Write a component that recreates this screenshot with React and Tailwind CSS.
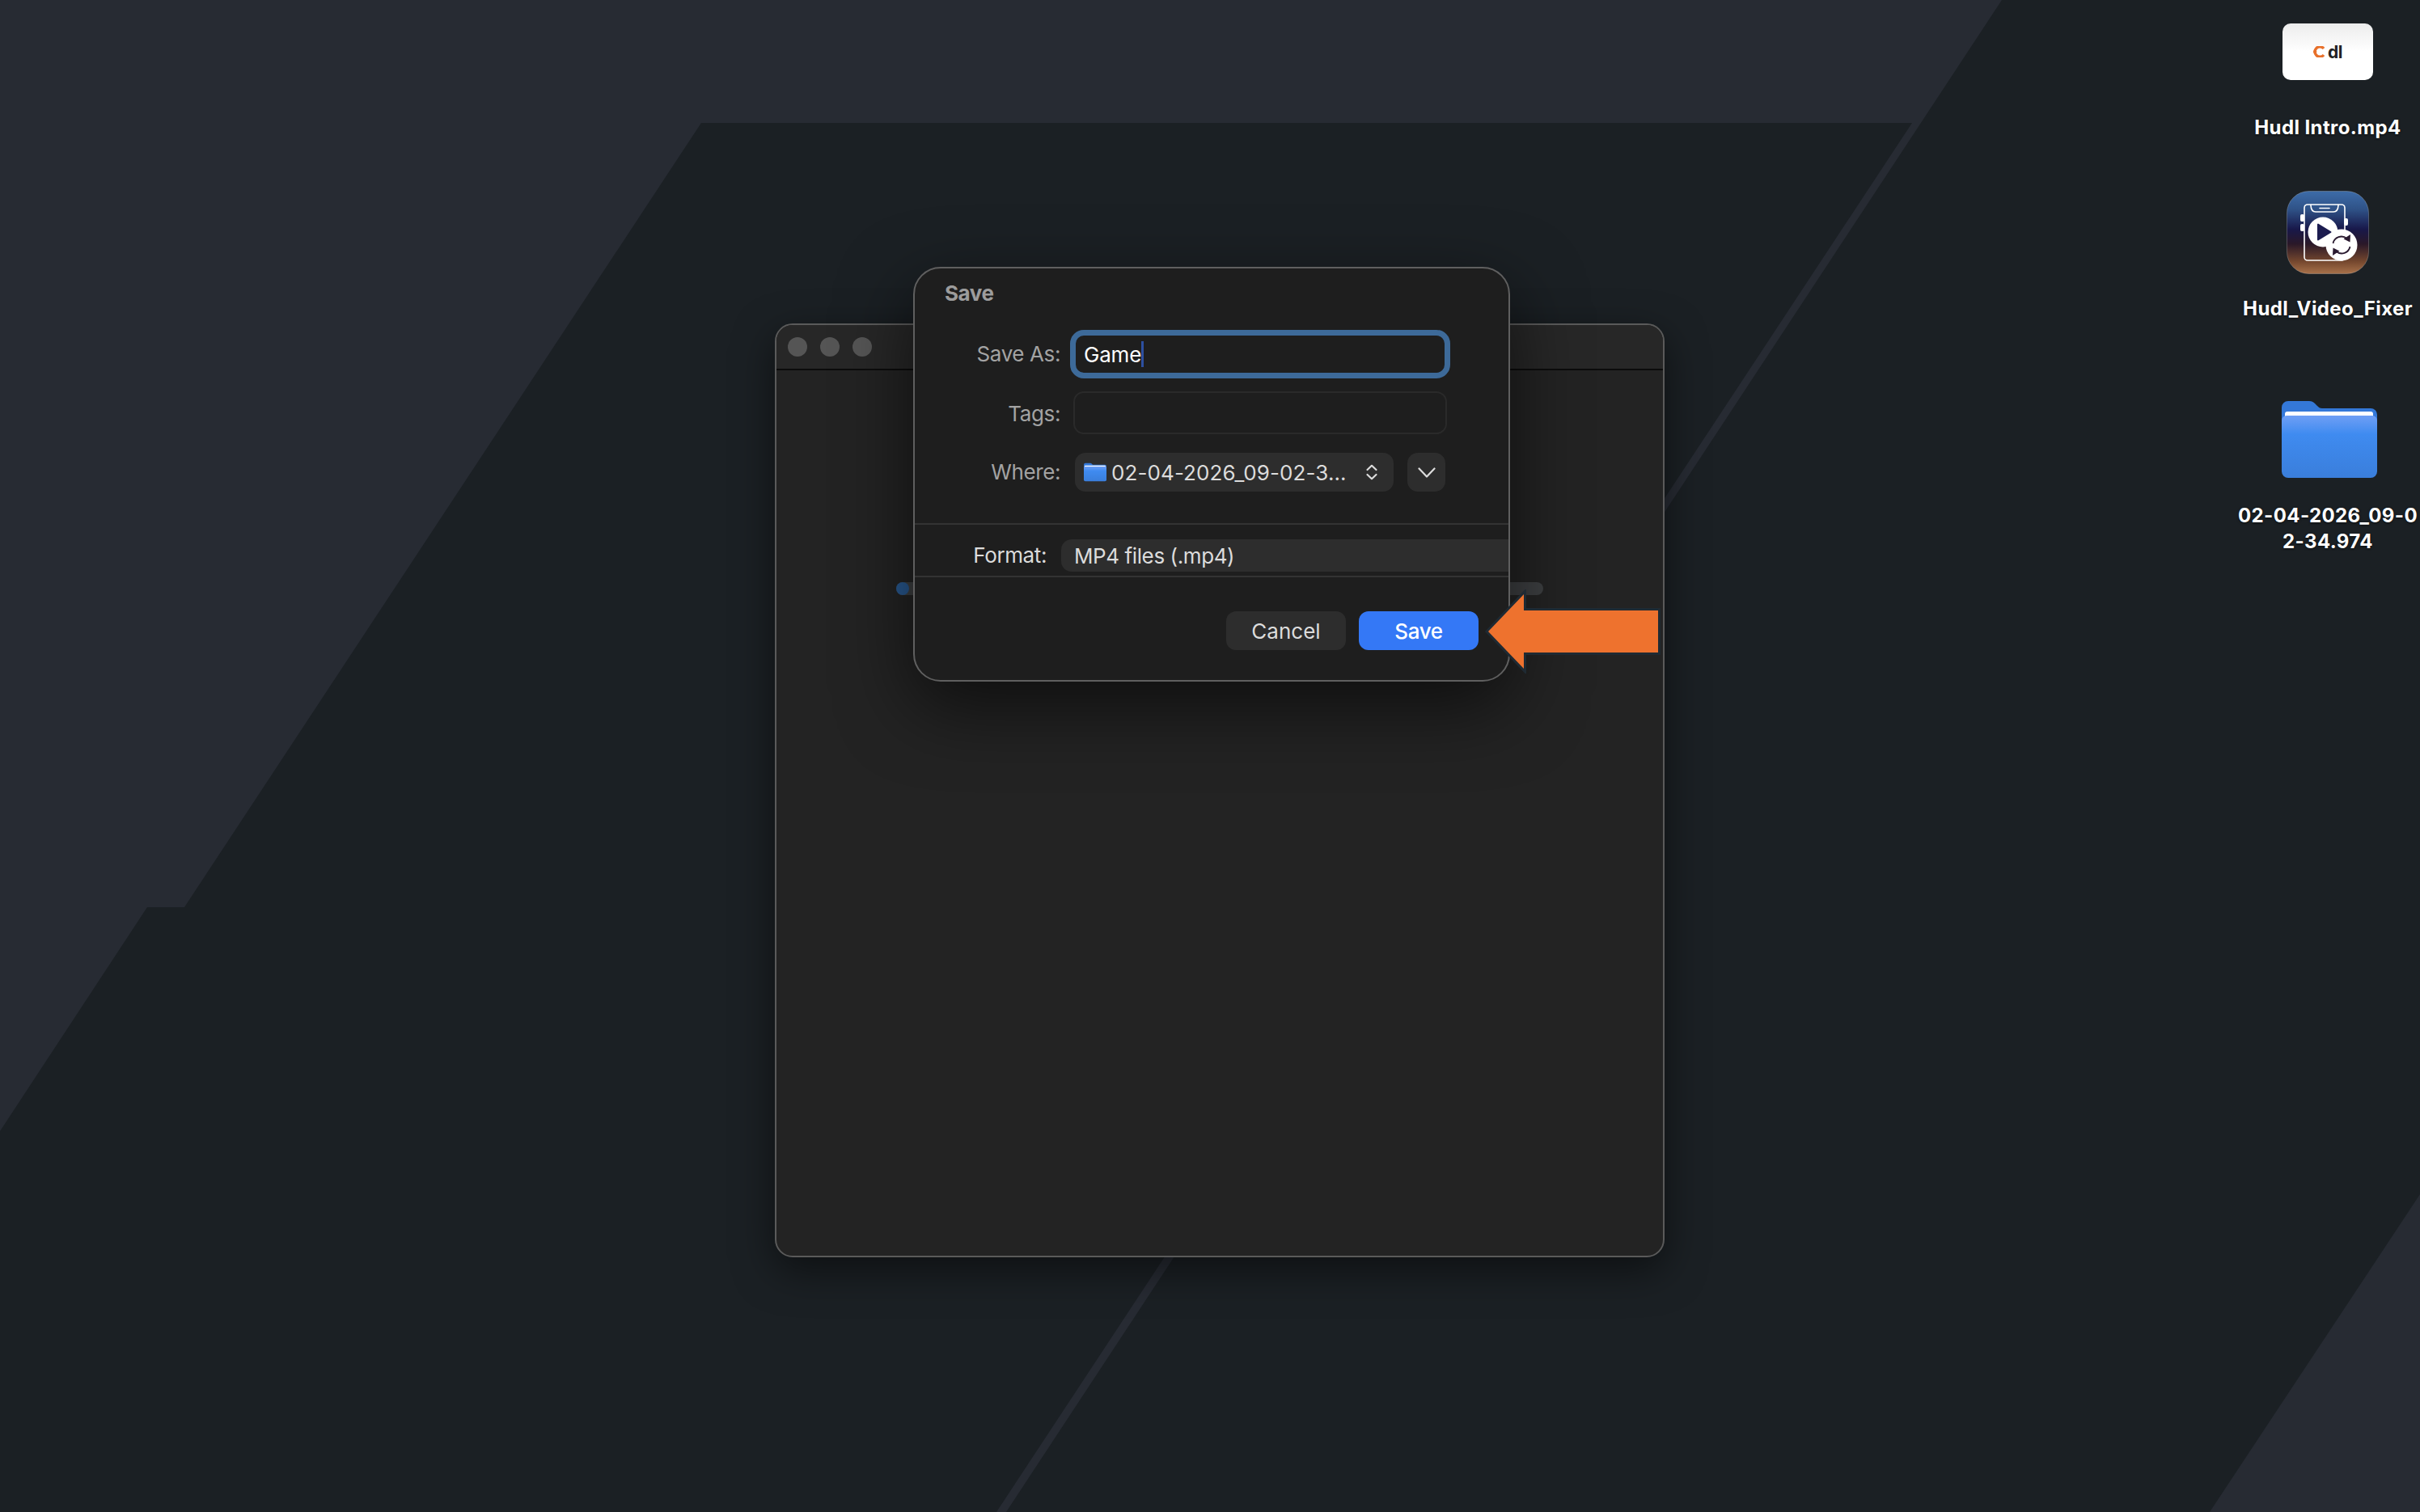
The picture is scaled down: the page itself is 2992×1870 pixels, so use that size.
import React from "react";

function FolderIcon({ className, id }) {
  return (
    <svg viewBox="0 0 118 95" className={className}>
      <defs>
        <linearGradient id={id} x1="0" y1="0" x2="0" y2="1">
          <stop offset="0" stopColor="#6f9ff5" />
          <stop offset="0.3" stopColor="#3f8bf0" />
          <stop offset="1" stopColor="#3a7edb" />
        </linearGradient>
      </defs>
      <path d="M0 8a8 8 0 0 1 8-8h26c3 0 5 1 7 3l3 3c2 2 3 3 6 3h60a8 8 0 0 1 8 8v40H0z" fill="#3478d8" />
      <rect x="4" y="13" width="109" height="14" rx="3" fill="#ffffff" />
      <path d="M0 24a6 6 0 0 1 6-6h106a6 6 0 0 1 6 6v63a8 8 0 0 1-8 8H8a8 8 0 0 1-8-8z" fill={`url(#${id})`} />
    </svg>
  );
}

function FixerIcon() {
  return (
    <svg viewBox="0 0 102 103" className="h-[103px] w-[102px]">
      <defs>
        <linearGradient id="fixerBg" x1="0" y1="0" x2="0" y2="1">
          <stop offset="0" stopColor="#3d6ca8" />
          <stop offset="0.22" stopColor="#2f5287" />
          <stop offset="0.46" stopColor="#18184a" />
          <stop offset="0.64" stopColor="#2a1828" />
          <stop offset="0.85" stopColor="#74472e" />
          <stop offset="1" stopColor="#a8714a" />
        </linearGradient>
      </defs>
      <rect x="0.5" y="0.5" width="101" height="102" rx="27" fill="url(#fixerBg)" stroke="#ffffff" strokeOpacity="0.22" />
      <rect x="17" y="29" width="5" height="9" rx="2" fill="#fff" />
      <rect x="17" y="41" width="5" height="9" rx="2" fill="#fff" />
      <rect x="71" y="34" width="5" height="9" rx="2" fill="#fff" />
      <rect x="22" y="17" width="50" height="69" rx="4" fill="none" stroke="#fff" strokeWidth="1.6" />
      <path d="M30 17c0 6 2 9 6 9h22c4 0 6-3 6-9" fill="none" stroke="#fff" strokeWidth="1.6" />
      <path d="M41 21.500h12" stroke="#fff" strokeWidth="1.6" strokeLinecap="round" />
      <circle cx="45" cy="51" r="18.500" fill="#fff" />
      <path d="M39 41.500v19l15.500-9.500z" fill="#1c1c50" stroke="#1c1c50" strokeWidth="2" strokeLinejoin="round" />
      <circle cx="68" cy="67" r="19.500" fill="#fff" />
      <path d="M57.500 65a10.500 10.500 0 0 1 17-6" fill="none" stroke="#2a1a30" strokeWidth="1.800" />
      <path d="M78.500 69a10.500 10.500 0 0 1-17 6" fill="none" stroke="#2a1a30" strokeWidth="1.800" />
      <path d="M79 54l-0.500 9.500-8-4z" fill="#2a1a30" />
      <path d="M57 80l0.500-9.500 8 4z" fill="#2a1a30" />
    </svg>
  );
}

function DesktopLabel({ children }) {
  return (
    <div className="h-8 text-[24px] leading-8 font-bold tracking-[0.4px] whitespace-nowrap text-white [text-shadow:0_1px_3px_rgba(0,0,0,0.6)]">
      {children}
    </div>
  );
}

function DesktopIcons() {
  return (
    <div className="absolute top-0 left-[2764px] flex w-[228px] flex-col items-center pt-[29px]">
      <div className="flex h-[70px] w-[112px] items-center justify-center gap-[3px] rounded-[10px] bg-gradient-to-b from-[#ececec] to-[#ffffff] to-50%">
        <svg viewBox="0 0 15 14" className="h-[14px] w-[15px]">
          <path d="M13 3A6.200 6.200 0 1 0 13 11" fill="none" stroke="#e8702a" strokeWidth="3.400" />
          <circle cx="2.200" cy="7" r="2.200" fill="#e8702a" />
        </svg>
        <span className="text-[21px] leading-none font-bold tracking-[-0.5px] text-[#222222]">dl</span>
      </div>
      <div className="mt-[43px]">
        <DesktopLabel>Hudl Intro.mp4</DesktopLabel>
      </div>
      <div className="mt-[62px] h-[103px]">
        <FixerIcon />
      </div>
      <div className="mt-[27px]">
        <DesktopLabel>Hudl_Video_Fixer</DesktopLabel>
      </div>
      <div className="mt-[98px] ml-1 h-[95px]">
        <FolderIcon id="deskFolder" className="h-[95px] w-[118px]" />
      </div>
      <div className="mt-[31px] flex flex-col items-center">
        <DesktopLabel>02-04-2026_09-0</DesktopLabel>
        <DesktopLabel>2-34.974</DesktopLabel>
      </div>
    </div>
  );
}

function BackWindow() {
  return (
    <div className="absolute top-[400px] left-[958px] h-[1155px] w-[1100px] overflow-hidden rounded-[22px] border-2 border-[#5a5a5a] bg-[#232323] shadow-[0_16px_50px_rgba(0,0,0,0.5)]">
      <div className="flex h-[56px] items-center gap-4 border-b-2 border-[#0c0c0c] bg-[#272727] pl-[14px]">
        <span className="h-6 w-6 rounded-full bg-[#555555]" />
        <span className="h-6 w-6 rounded-full bg-[#555555]" />
        <span className="h-6 w-6 rounded-full bg-[#555555]" />
      </div>
      <div className="mx-[148px] mt-[262px] h-4 rounded-full bg-[#3d3f41]">
        <div className="h-4 w-4 rounded-full bg-[#28588f]" />
      </div>
    </div>
  );
}

function FieldLabel({ children, className }) {
  return <div className={`text-right text-[26px] leading-8 tracking-[-0.4px] ${className}`}>{children}</div>;
}

function SaveDialog() {
  return (
    <div className="absolute top-[330px] left-[1129px] flex h-[513px] w-[738px] flex-col overflow-hidden rounded-[34px] border-2 border-[#5f5f5f] bg-[#1e1e1e] shadow-[0_30px_90px_rgba(0,0,0,0.6)]">
      <div className="pt-[15px] pl-[37px] text-[26px] leading-8 font-bold tracking-[-0.4px] text-[#9c9c9c]">Save</div>

      <div className="mt-[29px] flex items-center">
        <FieldLabel className="w-[180px] text-[#a3a3a3]">Save As:</FieldLabel>
        <div className="ml-3 flex h-[60px] w-[470px] items-center rounded-[17px] border-[7px] border-[#3d6a99] pl-[10px] text-[26px] tracking-[-0.2px] text-white">
          Game
          <span className="h-8 w-[3px] bg-[#2d4fa0]" />
        </div>
      </div>

      <div className="mt-4 flex items-center">
        <FieldLabel className="w-[180px] pt-[2px] text-[#a3a3a3]">Tags:</FieldLabel>
        <div className="ml-4 h-[53px] w-[462px] rounded-[13px] border-2 border-[#2a2a2a]" />
      </div>

      <div className="mt-[23px] flex items-center">
        <FieldLabel className="w-[180px] text-[#a3a3a3]">Where:</FieldLabel>
        <div className="ml-[18px] flex h-12 w-[394px] items-center rounded-[13px] bg-[#2d2d2d] pr-[19px] pl-[11px]">
          <FolderIcon id="popFolder" className="h-6 w-7" />
          <span className="ml-[6px] flex-1 text-[26px] tracking-[0.1px] whitespace-nowrap text-[#dcdcdc]">02-04-2026_09-02-3...</span>
          <svg viewBox="0 0 16 20" className="h-5 w-4" fill="none" stroke="#dcdcdc" strokeWidth="2.200" strokeLinecap="round" strokeLinejoin="round">
            <path d="M2.500 7L8 1.800 13.500 7" />
            <path d="M2.500 13L8 18.200 13.500 13" />
          </svg>
        </div>
        <div className="ml-[17px] flex h-12 w-[47px] items-center justify-center rounded-[13px] bg-[#2d2d2d]">
          <svg viewBox="0 0 22 13" className="h-[13px] w-[22px]" fill="none" stroke="#dcdcdc" strokeWidth="2.200" strokeLinecap="round" strokeLinejoin="round">
            <path d="M1.500 1.500L11 11.500 20.500 1.500" />
          </svg>
        </div>
      </div>

      <div className="mt-[39px] h-[2px] bg-[#333333]" />

      <div className="mt-[18px] flex items-center">
        <FieldLabel className="w-[163px] text-[#dcdcdc]">Format:</FieldLabel>
        <div className="ml-[18px] flex h-10 flex-1 items-center rounded-l-[13px] bg-[#2d2d2d] pl-[16px] text-[26px] tracking-[-0.4px] text-[#dcdcdc]">
          MP4 files (.mp4)
        </div>
      </div>

      <div className="mt-[5px] h-[2px] bg-[#333333]" />

      <div className="mt-[42px] flex justify-end gap-4 pr-[37px]">
        <button className="h-12 w-[148px] rounded-[12px] bg-[#2d2d2d] text-[26px] text-[#dcdcdc]">Cancel</button>
        <button className="h-12 w-[148px] rounded-[12px] bg-[#3478f6] text-[26px] font-medium tracking-[-0.4px] text-white">Save</button>
      </div>
    </div>
  );
}

export default function App() {
  return (
    <div className="relative h-[1870px] w-[2992px] overflow-hidden bg-[#1b2024] font-['Inter',sans-serif]">
      <svg viewBox="0 0 2992 1870" className="absolute inset-0 h-full w-full">
        <path
          d="M0 0H2475L1244 1870H1232L2364 152H867L228 1122H182L0 1399Z"
          fill="#272b33"
        />
        <path d="M2992 1477V1870H2732Z" fill="#272b33" />
      </svg>

      <BackWindow />
      <SaveDialog />

      <svg viewBox="0 0 224 104" className="absolute top-[729px] left-[1832px] h-[104px] w-[224px]">
        <path
          d="M8 52L52 6V26H218V78H52V98Z"
          fill="#ee722e"
          stroke="#1f2a33"
          strokeWidth="6"
          style={{ paintOrder: "stroke" }}
        />
      </svg>

      <DesktopIcons />
    </div>
  );
}
